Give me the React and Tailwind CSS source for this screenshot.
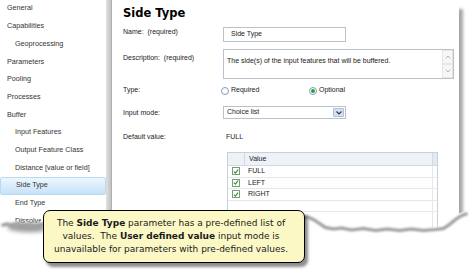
import React from 'react';

const navItems = [
  { label: 'General' },
  { label: 'Capabilities' },
  { label: 'Geoprocessing', sub: true },
  { label: 'Parameters' },
  { label: 'Pooling' },
  { label: 'Processes' },
  { label: 'Buffer' },
  { label: 'Input Features', sub: true },
  { label: 'Output Feature Class', sub: true },
  { label: 'Distance [value or field]', sub: true },
  { label: 'Side Type', sub: true, active: true },
  { label: 'End Type', sub: true },
  { label: 'Dissolve Type', sub: true, clip: true },
];

const ui = { fontFamily: '"Liberation Sans", Arial, sans-serif' };
const verdana = { fontFamily: '"DejaVu Sans", Verdana, sans-serif' };

// jagged bottom of the screenshot (page coords)
const edge = [
  [0, 223], [5, 221.5], [10, 223], [15, 221], [21, 223.5], [27, 222], [34, 223.5], [41, 222],
  [60, 223], [90, 222], [130, 223.5], [170, 222.5], [210, 224], [250, 222.5], [285, 223],
  [298, 219], [305, 214], [312, 217], [318, 221], [324, 225], [332, 226.5], [340, 225.5],
  [350, 227.5], [362, 226], [374, 228], [386, 226.5], [398, 228], [410, 226.5], [422, 228],
  [434, 227], [442, 226], [448, 222], [454, 217], [460, 213], [466, 211],
];

const Check = () => (
  <span className="w-[8px] h-[8px] border border-[#7a9a7a] bg-white flex items-center justify-center">
    <svg width="7" height="7" viewBox="0 0 7 7">
      <path d="M1 3.6 L2.8 5.4 L6 1.4" fill="none" stroke="#2f9a2f" strokeWidth="1.4" />
    </svg>
  </span>
);

const Radio = ({ on }) => (
  <span className="w-[8px] h-[8px] rounded-full border border-[#7e9cc0] bg-white flex items-center justify-center">
    {on && <span className="w-[4px] h-[4px] rounded-full bg-[#2aa52a]" />}
  </span>
);

export default function App() {
  const line = edge.map(([x, y]) => `${x},${y - 200}`).join(' ');
  const fill = `${line} 474,11 474,60 0,60`;

  return (
    <div className="relative w-[474px] h-[276px] bg-white overflow-hidden text-[#222]" style={ui}>
      {/* screenshot panel */}
      <div className="flex w-[459px] h-[236px] bg-white shadow-[4px_9px_3px_rgba(0,0,0,0.35)]">
        <div className="w-[106px] flex flex-col text-[7.2px] text-[#333]">
          {navItems.map((it) => (
            <div
              key={it.label}
              className={
                'h-[17.7px] shrink-0 flex items-center ' +
                (it.sub ? 'pl-[15px] ' : 'pl-[7px] ') +
                (it.active ? 'bg-gradient-to-b from-[#eef7fe] to-[#c5e2f8] border border-[#b6dbf5] rounded-[2px]' : '')
              }
            >
              {it.clip ? (
                <span className="w-[26px] overflow-hidden whitespace-nowrap">{it.label}</span>
              ) : (
                it.label
              )}
            </div>
          ))}
        </div>
        <div className="w-[6px] bg-gradient-to-r from-[#e2e2e2] to-[#c2c2c2] border-r border-[#b0b0b0]" />
        <div className="flex-1 flex flex-col pl-[11px] text-[7px]">
          <div className="h-[27px] flex items-center font-bold text-[11.5px] text-black" style={verdana}>
            Side Type
          </div>
          <div className="flex items-center h-[15px]">
            <div className="w-[100px] -mt-[4px]">Name:&nbsp; (required)</div>
            <div className="w-[123px] h-[15px] border border-[#b7c2cd] flex items-center pl-[7px]">Side Type</div>
          </div>
          <div className="flex mt-[7px] h-[30px]">
            <div className="w-[100px] pt-[4px]">Description:&nbsp; (required)</div>
            <div className="w-[231px] h-[30px] border border-[#b7c2cd] flex">
              <div className="flex-1 pl-[3px] pt-[6px]">The side(s) of the input features that will be buffered.</div>
              <div className="w-[11px] flex flex-col">
                <div className="flex-1 flex items-center justify-center border border-[#e6e6e6] bg-[#f7f7f7]">
                  <svg width="6" height="4" viewBox="0 0 6 4"><path d="M0.5 3.5 L3 1 L5.5 3.5" fill="none" stroke="#b5b5b5" /></svg>
                </div>
                <div className="flex-1 flex items-center justify-center border border-[#e6e6e6] bg-[#f7f7f7]">
                  <svg width="6" height="4" viewBox="0 0 6 4"><path d="M0.5 0.5 L3 3 L5.5 0.5" fill="none" stroke="#b5b5b5" /></svg>
                </div>
              </div>
            </div>
          </div>
          <div className="flex items-center h-[11px] mt-[6px]">
            <div className="w-[98px]">Type:</div>
            <div className="w-[88px] flex items-center gap-[2px]">
              <Radio />
              <span>Required</span>
            </div>
            <div className="flex items-center gap-[2px]">
              <Radio on />
              <span>Optional</span>
            </div>
          </div>
          <div className="flex items-center h-[13px] mt-[10px]">
            <div className="w-[100px] pt-[1px]">Input mode:</div>
            <div className="w-[123px] h-[13px] border border-[#b7c2cd] flex items-center">
              <span className="flex-1 pl-[3px]">Choice list</span>
              <span className="w-[11px] h-[9px] mr-[1px] bg-[#d6e1f0] border border-[#aebfd6] rounded-[1px] flex items-center justify-center">
                <svg width="6" height="4" viewBox="0 0 6 4"><path d="M0.5 0.5 L3 3 L5.5 0.5" fill="none" stroke="#2b3a55" strokeWidth="1.2" /></svg>
              </span>
            </div>
          </div>
          <div className="flex items-center h-[12px] mt-[12px]">
            <div className="w-[103px]">Default value:</div>
            <div>FULL</div>
          </div>
          <div className="ml-[104px] w-[211px] h-[80px] mt-[9px] border border-[#c8d0da] flex flex-col">
            <div className="h-[13px] flex bg-[#eef2f8] border-b border-[#d3dae3]">
              <div className="w-[17px] border-r border-[#d3dae3]" />
              <div className="flex-1 pl-[4px] flex items-center">Value</div>
              <div className="w-[5px] border-l border-[#d3dae3] bg-[#e4e9f0]" />
            </div>
            {['FULL', 'LEFT', 'RIGHT', ''].map((v, i) => (
              <div key={i} className="h-[11.5px] flex border-b border-[#e4e7eb]">
                <div className="w-[17px] flex items-center pl-[4px]">{v && <Check />}</div>
                <div className="flex-1 flex items-center pl-[3px]">{v}</div>
                <div className="w-[5px] border-l border-[#e4e7eb]" />
              </div>
            ))}
            <div className="flex-1 flex">
              <div className="flex-1" />
              <div className="w-[5px] border-l border-[#e4e7eb]" />
            </div>
          </div>
        </div>
      </div>

      {/* torn edge */}
      <svg className="absolute left-0 top-[200px]" width="474" height="60" viewBox="0 0 474 60">
        <defs>
          <filter id="blur" x="-10%" y="-50%" width="120%" height="200%">
            <feGaussianBlur stdDeviation="1.2" />
          </filter>
          <filter id="smear" x="-20%" y="-100%" width="140%" height="300%">
            <feGaussianBlur stdDeviation="2" />
          </filter>
        </defs>
        <polygon points={fill} fill="#fff" />
        <polyline points={line} transform="translate(1.5,2.5)" fill="none" stroke="#9a9a9a" strokeWidth="3" filter="url(#blur)" />
        <path d="M6 25 Q20 22 34 24 L44 23 L44 31 Q28 34 10 30 Z" fill="#9c9c9c" filter="url(#smear)" />
      </svg>

      {/* callout */}
      <div
        className="absolute left-[43px] top-[210px] w-[262px] h-[53px] rounded-[7px] border-[1.5px] border-black bg-[#fcf8c6] shadow-[3px_4px_3px_rgba(0,0,0,0.45)] flex flex-col items-center justify-center text-[9px] leading-[13.3px] text-[#1a1a1a] pr-[6px]"
        style={verdana}
      >
        <div>The <b>Side Type</b> parameter has a pre-defined list of</div>
        <div>values.&nbsp; The <b>User defined value</b> input mode is</div>
        <div>unavailable for parameters with pre-defined values.</div>
      </div>
    </div>
  );
}
